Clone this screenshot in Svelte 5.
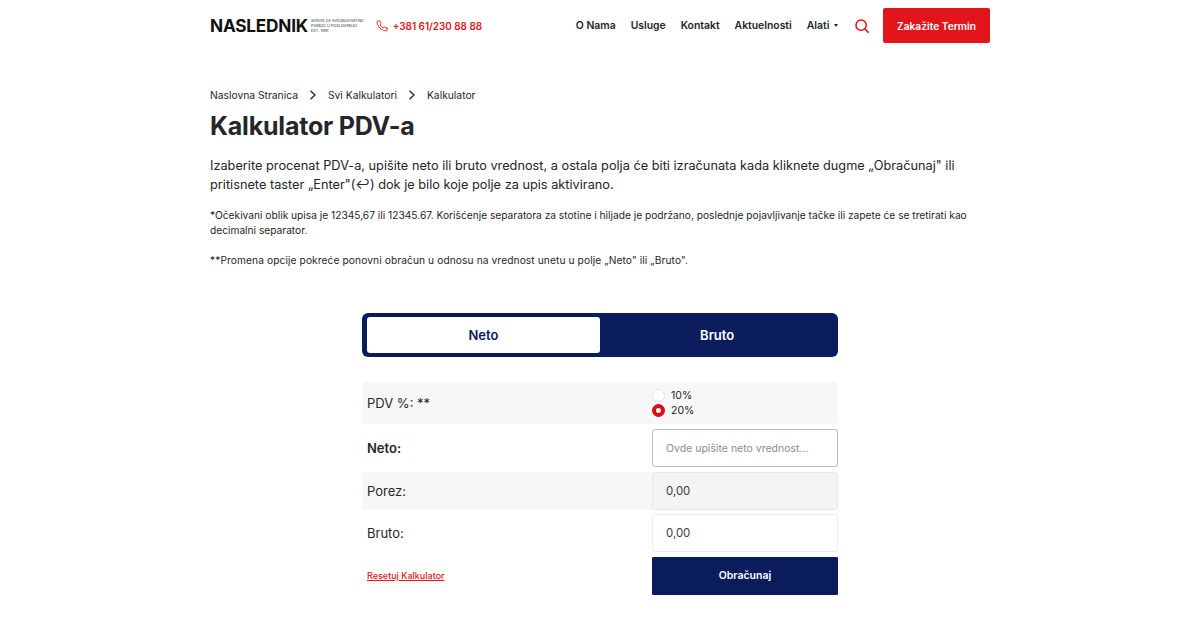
<script>
  const navLinks = ['O Nama', 'Usluge', 'Kontakt', 'Aktuelnosti'];
  const crumbs = ['Naslovna Stranica', 'Svi Kalkulatori', 'Kalkulator'];
</script>

<div class="page">
  <header class="header">
    <div class="brand">
      <span class="logo">NASLEDNIK</span>
      <span class="tagline">SERVIS ZA SVEOBUHVATNU<br />POMOĆ U POSLOVANJU<br />EST. 1991</span>
    </div>
    <a class="phone" href="#tel">
      <svg width="12" height="12" viewBox="0 0 24 24" fill="none" stroke="#e3151a" stroke-width="1.8" stroke-linecap="round" stroke-linejoin="round">
        <path d="M22 16.9v3a2 2 0 0 1-2.2 2 19.8 19.8 0 0 1-8.6-3.1 19.5 19.5 0 0 1-6-6 19.8 19.8 0 0 1-3.1-8.7A2 2 0 0 1 4.1 2h3a2 2 0 0 1 2 1.7c.1 1 .4 1.9.7 2.8a2 2 0 0 1-.5 2.1L8.1 9.9a16 16 0 0 0 6 6l1.3-1.3a2 2 0 0 1 2.1-.4c.9.3 1.8.5 2.8.7a2 2 0 0 1 1.7 2z" />
      </svg>
      +381 61/230 88 88
    </a>
    <nav class="nav">
      {#each navLinks as link}
        <a href="#link">{link}</a>
      {/each}
      <a href="#alati" class="dropdown">Alati <span class="caret"></span></a>
    </nav>
    <svg class="search" width="14" height="14" viewBox="0 0 24 24" fill="none" stroke="#e3151a" stroke-width="2.6" stroke-linecap="round">
      <circle cx="10.5" cy="10.5" r="8.8" />
      <path d="M17 17l5.5 5.5" />
    </svg>
    <button class="cta">Zakažite Termin</button>
  </header>

  <main class="content">
    <div class="crumbs">
      {#each crumbs as crumb, i}
        {#if i > 0}
          <svg width="8" height="10" viewBox="0 0 8 10" fill="none" stroke="#24262b" stroke-width="1.3">
            <path d="M1.5 .8L6 5 1.5 9.2" />
          </svg>
        {/if}
        <span>{crumb}</span>
      {/each}
    </div>

    <h1>Kalkulator PDV-a</h1>

    <p class="lead">Izaberite procenat PDV-a, upišite neto ili bruto vrednost, a ostala polja će biti izračunata kada kliknete dugme „Obračunaj" ili pritisnete taster „Enter"(↩) dok je bilo koje polje za upis aktivirano.</p>

    <p class="note">*Očekivani oblik upisa je 12345,67 ili 12345.67. Korišćenje separatora za stotine i hiljade je podržano, poslednje pojavljivanje tačke ili zapete će se tretirati kao decimalni separator.</p>

    <p class="note second">**Promena opcije pokreće ponovni obračun u odnosu na vrednost unetu u polje „Neto" ili „Bruto".</p>

    <section class="calc">
      <div class="tabs">
        <button class="tab active">Neto</button>
        <button class="tab">Bruto</button>
      </div>

      <div class="rows">
        <div class="row shaded tall">
          <span class="label">PDV %: **</span>
          <div class="radios">
            <label><span class="radio"></span>10%</label>
            <label><span class="radio checked"></span>20%</label>
          </div>
        </div>

        <div class="row">
          <span class="label strong">Neto:</span>
          <div class="field focus placeholder">Ovde upišite neto vrednost...</div>
        </div>

        <div class="row shaded">
          <span class="label">Porez:</span>
          <div class="field readonly">0,00</div>
        </div>

        <div class="row">
          <span class="label">Bruto:</span>
          <div class="field">0,00</div>
        </div>

        <div class="row">
          <a class="reset" href="#reset">Resetuj Kalkulator</a>
          <button class="submit">Obračunaj</button>
        </div>
      </div>
    </section>
  </main>
</div>

<style>
  :global(body) {
    background: #fff;
    color: #24262b;
    font-family: "Inter", "Noto Sans", sans-serif;
  }

  .page {
    width: 780px;
    height: 630px;
    margin: 0 auto;
    overflow: hidden;
  }

  .header {
    display: flex;
    align-items: center;
    height: 35px;
    padding-top: 8px;
  }

  .brand {
    display: flex;
    align-items: center;
    gap: 3px;
  }

  .logo {
    font-size: 17.2px;
    font-weight: 700;
    color: #111;
    letter-spacing: -0.2px;
  }

  .tagline {
    font-size: 3.9px;
    line-height: 5px;
    color: #333;
  }

  .phone {
    display: flex;
    align-items: center;
    gap: 5px;
    margin-left: 12px;
    color: #e3151a;
    font-size: 9.9px;
    font-weight: 600;
    text-decoration: none;
  }

  .nav {
    display: flex;
    align-items: center;
    gap: 15px;
    margin-left: auto;
  }

  .nav a {
    color: #24262b;
    font-size: 10.4px;
    font-weight: 600;
    text-decoration: none;
  }

  .caret {
    display: inline-block;
    margin-left: 2px;
    vertical-align: 2px;
    border: 2px solid transparent;
    border-top: 3px solid #24262b;
    border-bottom: 0;
  }

  .search {
    margin: 0 14px 0 17px;
  }

  .cta {
    width: 107px;
    height: 35px;
    border: 0;
    border-radius: 2px;
    background: #e3151a;
    color: #fff;
    font: 600 10.2px "Inter", sans-serif;
  }

  .content {
    padding-top: 45px;
  }

  .crumbs {
    display: flex;
    align-items: center;
    gap: 11px;
    height: 14px;
    font-size: 10.3px;
  }

  h1 {
    margin: 7px 0 0;
    font-size: 25px;
    line-height: 34px;
    font-weight: 700;
    letter-spacing: -0.2px;
  }

  .lead {
    margin: 13px 0 0;
    font-size: 12.75px;
    line-height: 19px;
  }

  .note {
    margin: 14px 0 0;
    font-size: 10.2px;
    line-height: 15px;
  }

  .note.second {
    margin-top: 15px;
    letter-spacing: 0.1px;
  }

  .calc {
    width: 476px;
    margin: 45px auto 0;
  }

  .tabs {
    display: flex;
    height: 44px;
    padding: 4px 4px 4px 4.5px;
    box-sizing: border-box;
    border-radius: 6px;
    background: #0b1c5c;
  }

  .tab {
    flex: 1;
    border: 0;
    border-radius: 3px;
    background: transparent;
    color: #fff;
    font: 600 13px "Inter", sans-serif;
  }

  .tab.active {
    background: #fff;
    color: #0b1c5c;
  }

  .rows {
    display: flex;
    flex-direction: column;
    gap: 4.5px;
    margin-top: 25px;
  }

  .row {
    display: grid;
    grid-template-columns: 290px 186px;
    align-items: center;
    height: 38px;
  }

  .row.shaded {
    background: #f7f7f7;
    border-radius: 3px;
  }

  .row.tall {
    height: 42px;
    margin-bottom: 0.5px;
  }

  .label {
    padding-left: 5px;
    font-size: 13px;
  }

  .label.strong {
    font-weight: 600;
  }

  .radios {
    display: flex;
    flex-direction: column;
    gap: 2px;
    font-size: 10.5px;
  }

  .radios label {
    display: flex;
    align-items: center;
    gap: 6px;
    height: 13px;
  }

  .radio {
    width: 13px;
    height: 13px;
    box-sizing: border-box;
    border: 1px solid #e2e2e2;
    border-radius: 50%;
    background: #fff;
  }

  .radio.checked {
    border: 4px solid #e00b12;
  }

  .field {
    display: flex;
    align-items: center;
    height: 38px;
    box-sizing: border-box;
    padding-left: 13px;
    border: 1.5px solid #ededed;
    border-radius: 3px;
    background: #fff;
    color: #3c3c3c;
    font-size: 11.4px;
  }

  .field.readonly {
    border-color: #e8e8e8;
    background: #f4f4f4;
  }

  .field.focus {
    border-color: #bbb;
    font-size: 10.5px;
  }

  .field.placeholder {
    color: #8d8d8d;
  }

  .reset {
    padding-left: 5px;
    color: #e3151a;
    font-size: 9px;
    font-weight: 500;
  }

  .submit {
    height: 38px;
    border: 0;
    border-radius: 1px;
    background: #0b1c5c;
    color: #fff;
    font: 600 10.5px "Inter", sans-serif;
  }
</style>
